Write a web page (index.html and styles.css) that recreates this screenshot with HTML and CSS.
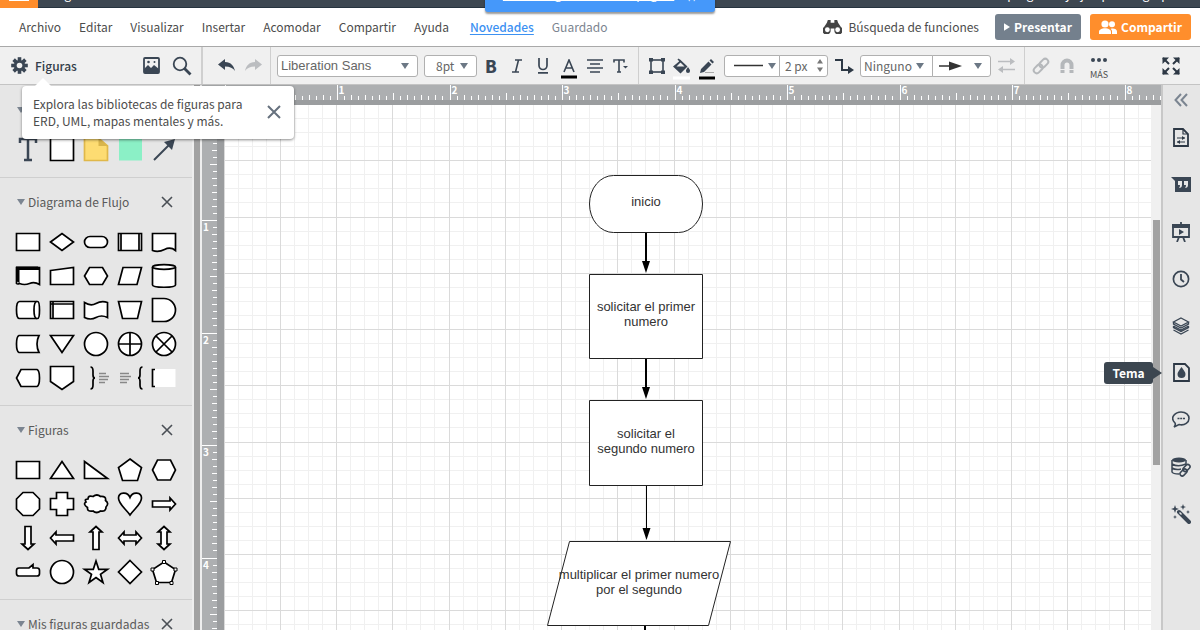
FILE: index.html
```html
<!DOCTYPE html>
<html lang="es">
<head>
<meta charset="utf-8">
<title>Diagrama</title>
<link rel="stylesheet" href="styles.css">
</head>
<body>
<header class="topbar">
  <div class="logo"></div>
  <span class="doc-title">Diagrama</span>
  <span class="account">programa y ejemplo del grupo</span>
  <div class="banner"><a href="#">Cómo asignar color a la página</a><span>( )</span></div>
</header>

<nav class="menubar">
  <a href="#">Archivo</a><a href="#">Editar</a><a href="#">Visualizar</a><a href="#">Insertar</a><a href="#">Acomodar</a><a href="#">Compartir</a><a href="#">Ayuda</a>
  <a href="#" class="news">Novedades</a>
  <span class="saved">Guardado</span>
  <button class="find">
    <svg width="19" height="14" viewBox="0 0 20 15"><path d="M5 0h3v3h4V0h3l1 3 3 4.500a4.500 4.500 0 1 1-7 4.500V9H8v3a4.500 4.500 0 1 1-7-4.500L4 3z" fill="#444"/><circle cx="4.500" cy="10.500" r="2.600" fill="#fff"/><circle cx="15.500" cy="10.500" r="2.600" fill="#fff"/></svg>
    Búsqueda de funciones</button>
  <button class="btn present"><svg width="6" height="8" viewBox="0 0 7 9"><path d="M0 0l7 4.500L0 9z" fill="#fff"/></svg>Presentar</button>
  <button class="btn share"><svg width="18" height="14" viewBox="0 0 18 14"><g fill="#fff"><circle cx="6" cy="4" r="3.600"/><path d="M0 14v-2c0-5 12-5 12 0v2zM13 14v-2.500c0-1-.5-2-1.500-2.500 3-1 6.500 0 6.500 2.500V14z"/><circle cx="13" cy="4.300" r="3"/></g></svg>Compartir</button>
</nav>

<div class="toolbar">
  <div class="group library">
    <button class="shapes-btn">
      <svg width="17" height="17" viewBox="-8.500 -8.500 17 17"><g fill="#3a4654"><g id="tooth"><rect x="-1.800" y="-8.300" width="3.600" height="16.600"/><rect x="-8.300" y="-1.800" width="16.600" height="3.600"/></g><use href="#tooth" transform="rotate(45)"/><circle r="5.600"/></g><circle r="2.800" fill="#f0f0f0"/></svg>
      Figuras</button>
    <button aria-label="Imagen"><svg width="17" height="17" viewBox="0 0 17 17"><rect x="1" y="1" width="15" height="15" rx="1" fill="#f0f0f0" stroke="#3a4654" stroke-width="1.800"/><path d="M1 12l4-4 3 3 3-3 5 4v4H1z" fill="#3a4654"/><circle cx="5.500" cy="5" r="1.300" fill="#3a4654"/><circle cx="11.500" cy="5" r="1" fill="#3a4654"/></svg></button>
    <button aria-label="Buscar"><svg width="20" height="20" viewBox="0 0 20 20"><circle cx="8" cy="8" r="6.300" fill="none" stroke="#3a4654" stroke-width="1.800"/><path d="M12.500 12.500l6 6" stroke="#3a4654" stroke-width="2.800"/></svg></button>
  </div>
  <div class="group history">
    <button aria-label="Deshacer"><svg width="18" height="14" viewBox="0 0 18 14"><path d="M7 0v3c6 0 9 4 10 9-2-3-5-4.500-10-4.500V11L0 5.500z" fill="#3a4654"/></svg></button>
    <button aria-label="Rehacer"><svg width="18" height="14" viewBox="0 0 18 14"><path d="M11 0v3C5 3 2 7 1 12c2-3 5-4.500 10-4.500V11l7-5.500z" fill="#bbbdc0"/></svg></button>
  </div>
  <div class="group text-tools">
    <label class="field font"><select aria-label="Fuente"><option>Liberation Sans</option></select></label>
    <label class="field size"><select aria-label="Tamaño"><option>8pt</option></select></label>
    <button class="glyph bold">B</button>
    <button aria-label="Cursiva"><svg width="12" height="14" viewBox="0 0 12 14"><path d="M4 1h7M1 13h7M7.500 1l-3 12" stroke="#3a4654" stroke-width="1.600"/></svg></button>
    <button aria-label="Subrayado"><svg width="12" height="16" viewBox="0 0 12 16"><path d="M2 0v7.500a4 4 0 0 0 8 0V0M1 14.800h10" fill="none" stroke="#3a4654" stroke-width="1.700"/></svg></button>
    <button aria-label="Color de texto"><svg class="low" width="16" height="20" viewBox="0 0 16 20"><path d="M3 13L8 1l5 12M4.500 9h7" fill="none" stroke="#3a4654" stroke-width="1.600"/><rect y="16.500" width="16" height="3" fill="#000"/></svg></button>
    <button aria-label="Alinear"><svg width="16" height="14" viewBox="0 0 16 14"><path d="M0 1h16M3 5h10M0 9h16M3 13h10" stroke="#3a4654" stroke-width="1.600"/></svg></button>
    <button aria-label="Más texto"><svg width="16" height="14" viewBox="0 0 16 14"><path d="M1 3.500V1h10v2.500M6 1v12M4 13h4" fill="none" stroke="#3a4654" stroke-width="1.600"/><path d="M10 7h5l-2.500 2.500z" fill="#3a4654"/></svg></button>
  </div>
  <div class="group line-tools">
    <button aria-label="Forma"><svg width="18" height="18" viewBox="0 0 18 18"><rect x="3" y="3" width="12" height="12" fill="none" stroke="#3a4654" stroke-width="1.600"/><path d="M1 1h4v3.500H1zM13 1h4v3.500h-4zM1 13.500h4V17H1zM13 13.500h4V17h-4z" fill="#3a4654"/></svg></button>
    <button aria-label="Relleno"><svg class="low" width="17" height="22" viewBox="0 0 17 22"><path d="M6.500 1l8 7.500L7.500 15.500 0 8.500 6 3.500" fill="#3a4654"/><path d="M7.500 4.500L3.500 8.500h8z" fill="#f0f0f0"/><path d="M5 1l3 3" stroke="#3a4654" stroke-width="1.500"/><path d="M15 9c2 3 2 3 2 4a2 2 0 0 1-4 0c0-1 0-1 2-4z" fill="#3a4654"/><rect y="18.500" width="17" height="3" fill="#fff"/></svg></button>
    <button aria-label="Color de línea"><svg class="low" width="16" height="22" viewBox="0 0 16 22"><path d="M1 15l1-4L9.500 3.500l3 3L5 14zM10.500 2.500l1.500-1.500 3 3-1.500 1.500z" fill="#3a4654"/><path d="M6 14.500h9" stroke="#aaa"/><rect y="18.500" width="16" height="3" fill="#000"/></svg></button>
    <button class="field stroke" aria-label="Estilo de línea"><svg width="29" height="3" viewBox="0 0 29 3"><path d="M0 1.500h29" stroke="#333" stroke-width="1.500"/></svg></button>
    <label class="field px"><input type="text" value="2 px" aria-label="Grosor"><svg width="6" height="13" viewBox="0 0 6 13"><path d="M0 4.500L3 0l3 4.500zM0 8.500L3 13l3-4.500z" fill="#777"/></svg></label>
    <button class="connector" aria-label="Conector"><svg width="19" height="16" viewBox="0 0 19 16"><path d="M0 2h7v10h7" fill="none" stroke="#2d3845" stroke-width="2"/><path d="M13 8l6 4-6 4z" fill="#2d3845"/></svg></button>
    <label class="field start"><select aria-label="Inicio de línea"><option>Ninguno</option></select></label>
    <button class="field end" aria-label="Fin de línea"><svg width="23" height="10" viewBox="0 0 23 10"><path d="M0 5h11" stroke="#333" stroke-width="1.500"/><path d="M10 .500L23 5l-13 4.500z" fill="#333"/></svg></button>
    <button class="swap" aria-label="Invertir"><svg width="17" height="15" viewBox="0 0 17 15"><path d="M0 3.500h14M3 11.500h14" stroke="#bbbdc0" stroke-width="1.600"/><path d="M12 0l5 3.500L12 7zM5 8L0 11.500 5 15z" fill="#bbbdc0"/></svg></button>
  </div>
  <div class="group more-tools">
    <button aria-label="Enlace"><svg width="18" height="18" viewBox="0 0 18 18"><g fill="none" stroke="#b5b8bb" stroke-width="2"><rect x="-5" y="-3" width="10" height="6" rx="3" transform="translate(11.800 6.200) rotate(-45)"/><rect x="-5" y="-3" width="10" height="6" rx="3" transform="translate(6.200 11.800) rotate(-45)"/></g></svg></button>
    <button aria-label="Imán"><svg width="14" height="16" viewBox="0 0 14 16"><path d="M2.500 15V7a4.500 4.500 0 0 1 9 0v8" fill="none" stroke="#b5b8bb" stroke-width="4"/><path d="M0 11.500h14" stroke="#f0f0f0"/></svg></button>
    <button class="more"><svg width="16" height="4" viewBox="0 0 16 4"><g fill="#3a4654"><circle cx="2" cy="2" r="2"/><circle cx="8" cy="2" r="2"/><circle cx="14" cy="2" r="2"/></g></svg>MÁS</button>
    <button class="full" aria-label="Pantalla completa"><svg width="18" height="18" viewBox="0 0 18 18"><path d="M1 1l6 6M17 1l-6 6M1 17l6-6M17 17l-6-6" stroke="#2d3845" stroke-width="2"/><path d="M.500 .500H7L.500 7zM17.500 .500H11L17.500 7zM.500 17.500H7L.500 11zM17.500 17.500H11l6.500-6.500z" fill="#2d3845"/></svg></button>
  </div>
</div>

<div class="workspace">
  <aside class="sidebar">
    <section>
      <h2 aria-label="Estándar"></h2>
      <div class="shapes">
        <svg viewBox="0 0 34 34" class="plain"><path d="M9 10V6h16v4M17 6v21M13 27h8" fill="none" stroke="#3a4654" stroke-width="2.500"/></svg>
        <svg viewBox="0 0 34 34"><path d="M5.500 5.500h23v22h-23z"/></svg>
        <svg viewBox="0 0 34 34" class="plain"><path d="M5.500 5h14l9 8v14.500h-23z" fill="#fddc72" stroke="#e0b84a"/><path d="M19.500 5v8h9z" fill="#d9b54c"/></svg>
        <svg viewBox="0 0 34 34" class="plain"><path d="M6 5h23v22.500H6z" fill="#8bf0c6"/></svg>
        <svg viewBox="0 0 34 34" class="plain"><path d="M7 27L22 12" stroke="#3a4654" stroke-width="2"/><path d="M28 6l-3 11-8-8z" fill="#3a4654"/></svg>
      </div>
    </section>
    <section>
      <h2>Diagrama de Flujo <button aria-label="Cerrar Diagrama de Flujo"><svg width="12" height="12" viewBox="0 0 12 12"><path d="M1 1l10 10M11 1L1 11" stroke="#4a4f55" stroke-width="1.600"/></svg></button></h2>
      <div class="shapes">
        <svg viewBox="0 0 34 34"><path d="M5.500 8.500h23v17h-23z"/></svg>
        <svg viewBox="0 0 34 34"><path d="M5.500 17L17 8.500 28.500 17 17 25.500z"/></svg>
        <svg viewBox="0 0 34 34"><rect x="5.500" y="11.500" width="23" height="11" rx="5.500"/></svg>
        <svg viewBox="0 0 34 34"><path d="M5.500 8.500h23v17h-23zM8 8v18M26 8v18"/></svg>
        <svg viewBox="0 0 34 34"><path d="M5.500 8.500h23v17q-5-4-11-1t-12 1z"/></svg>
        <svg viewBox="0 0 34 34"><path d="M5.500 8.500h23v17q-5-3-10-1t-10 0q-2 1-3 0z"/><path d="M5 7.500h22l2 3.500H8.500V24L5 22z" fill="#000" stroke="none"/></svg>
        <svg viewBox="0 0 34 34"><path d="M5.500 11.500l23-3v17h-23z"/></svg>
        <svg viewBox="0 0 34 34"><path d="M5.500 17l5-8.500h13l5 8.500-5 8.500h-13z"/></svg>
        <svg viewBox="0 0 34 34"><path d="M10 8.500h18.500L24 25.500H5.500z"/></svg>
        <svg viewBox="0 0 34 34"><path d="M5.500 8v18c0 3 23 3 23 0V8"/><ellipse cx="17" cy="8" rx="11.500" ry="2.300"/></svg>
        <svg viewBox="0 0 34 34"><path d="M8.500 8.500h18q2 0 2 8.500t-2 8.500h-18q-3 0-3-8.500t3-8.500z"/><path d="M26 8.500q-3 0-3 8.500t3 8.500"/></svg>
        <svg viewBox="0 0 34 34"><path d="M5.500 8.500h23v17h-23zM5.500 11h23M8 8v18"/></svg>
        <svg viewBox="0 0 34 34"><path d="M5.500 9.500q6 4 11.500 1t11.500-1v15q-6-3-11.500 0t-11.500 0z"/></svg>
        <svg viewBox="0 0 34 34"><path d="M5.500 8.500h23l-4 17h-15z"/></svg>
        <svg viewBox="0 0 34 34"><path d="M5.500 5.500H17a11.500 11.500 0 0 1 0 23H5.500z"/></svg>
        <svg viewBox="0 0 34 34"><path d="M8 8.500h20q-2 4-2 8.500t2 8.500H8q-2.500-1-2.500-8.500T8 8.500z"/></svg>
        <svg viewBox="0 0 34 34"><path d="M5.500 8.500h23L17 25.500z"/></svg>
        <svg viewBox="0 0 34 34"><circle cx="17" cy="17" r="11.500"/></svg>
        <svg viewBox="0 0 34 34"><circle cx="17" cy="17" r="11.500"/><path d="M5.500 17h23M17 5.500v23"/></svg>
        <svg viewBox="0 0 34 34"><circle cx="17" cy="17" r="11.500"/><path d="M9 9l16 16M25 9L9 25"/></svg>
        <svg viewBox="0 0 34 34"><path d="M10 8.500h16q2.500 1 2.500 8.500T26 25.500H10L5.500 17z"/></svg>
        <svg viewBox="0 0 34 34"><path d="M5.500 5.500h23v15L17 28.500l-11.500-8z"/></svg>
        <svg viewBox="0 0 34 34" class="line"><path d="M11.500 6q2.500 0 2.500 4v4q0 3 2 3-2 0-2 3v4q0 4-2.500 4"/><path d="M20 12.500h7M20 15.500h10M20 18.500h9M20 21.500h6" stroke="#888"/></svg>
        <svg viewBox="0 0 34 34" class="line"><path d="M29.500 6q-2.500 0-2.500 4v4q0 3-2 3 2 0 2 3v4q0 4 2.500 4"/><path d="M7 12.500h9M7 15.500h11M7 18.500h9M7 21.500h7" stroke="#888"/></svg>
        <svg viewBox="0 0 34 34"><path d="M5.500 8h23v18h-23z" stroke="none"/><path d="M8 8.500H5.500v17H8"/></svg>
      </div>
    </section>
    <section>
      <h2>Figuras <button aria-label="Cerrar Figuras"><svg width="12" height="12" viewBox="0 0 12 12"><path d="M1 1l10 10M11 1L1 11" stroke="#4a4f55" stroke-width="1.600"/></svg></button></h2>
      <div class="shapes">
        <svg viewBox="0 0 34 34"><path d="M5.500 8.500h23v17h-23z"/></svg>
        <svg viewBox="0 0 34 34"><path d="M5.500 25.500L17 8.500l11.500 17z"/></svg>
        <svg viewBox="0 0 34 34"><path d="M5.500 8.500l23 17h-23z"/></svg>
        <svg viewBox="0 0 34 34"><path d="M17 6l11.500 8.500-4 13h-15l-4-13z"/></svg>
        <svg viewBox="0 0 34 34"><path d="M5.500 17l5-10h13l5 10-5 10h-13z"/></svg>
        <svg viewBox="0 0 34 34"><path d="M12 5.500h10l6.500 6.500v10L22 28.500H12L5.500 22V12z"/></svg>
        <svg viewBox="0 0 34 34"><path d="M11.500 5.500h11v6h6v11h-6v6h-11v-6h-6v-11h6z"/></svg>
        <svg viewBox="0 0 34 34"><path d="M9 12q0-4 5-2.500 4-3 7.500 0 6-.500 5 4 4 3 .500 6.500 0 5-5.500 4-4 3-7.500 0-6 1-5.500-3.500-5-3.500-1.500-5.500Q5 12 9 12z"/></svg>
        <svg viewBox="0 0 34 34"><path d="M17 28C12 21 5.500 17 5.500 11c0-6 9-7 11.500-.500C19.500 4 28.500 5 28.500 11c0 6-6.500 10-11.500 17z"/></svg>
        <svg viewBox="0 0 34 34"><path d="M5.500 14H23v-3l5.500 6-5.500 6v-3H5.500z"/></svg>
        <svg viewBox="0 0 34 34"><path d="M14 5.500h6V23h3l-6 5.500-6-5.500h3z"/></svg>
        <svg viewBox="0 0 34 34"><path d="M28.500 14H11v-3l-5.500 6 5.500 6v-3h17.500z"/></svg>
        <svg viewBox="0 0 34 34"><path d="M14 28.500h6V11h3l-6-5.500-6 5.500h3z"/></svg>
        <svg viewBox="0 0 34 34"><path d="M5.500 17l5.500-6v3h12v-3l5.500 6-5.500 6v-3H11v3z"/></svg>
        <svg viewBox="0 0 34 34"><path d="M17 5.500l6 5.500h-3v12h3l-6 5.500-6-5.500h3V11h-3z"/></svg>
        <svg viewBox="0 0 34 34"><path d="M8 13h10l4-3.500V13h4q2.500 0 2.500 2.500v3Q28.500 21 26 21H8q-2.500 0-2.500-2.500v-3Q5.500 13 8 13z"/></svg>
        <svg viewBox="0 0 34 34"><circle cx="17" cy="17" r="11.500"/></svg>
        <svg viewBox="0 0 34 34"><path d="M17 6l2.700 8.300h8.800l-7 5 2.500 8.200-7-5-7 5 2.500-8.200-7-5h8.800z"/></svg>
        <svg viewBox="0 0 34 34"><path d="M17 5.500L28.500 17 17 28.500 5.500 17z"/></svg>
        <svg viewBox="0 0 34 34"><path d="M17 7l11.500 7.500-4 13h-15l-4-13z"/><path d="M15.500 5.500h3v3h-3zM27 13h3v3h-3zM23 26.500h3v3h-3zM8.500 26.500h3v3h-3zM4 13h3v3H4z" stroke-width="1"/></svg>
      </div>
    </section>
    <section>
      <h2>Mis figuras guardadas <button aria-label="Cerrar Mis figuras guardadas"><svg width="12" height="12" viewBox="0 0 12 12"><path d="M1 1l10 10M11 1L1 11" stroke="#4a4f55" stroke-width="1.600"/></svg></button></h2>
    </section>
  </aside>
  <div class="side-scroll"></div>

  <main class="stage">
    <svg class="ruler-h" id="rulerH"></svg>
    <svg class="ruler-v" id="rulerV"></svg>
    <svg class="canvas" id="canvas">
      <g id="grid"></g>
      <g class="node">
        <rect x="365.500" y="70.500" width="113" height="57" rx="24" ry="28.500"/>
        <path d="M365.500 169.500h113v84h-113zM365.500 295.500h113v85h-113zM345.500 436.500h161l-22 84h-161z"/>
      </g>
      <g class="edge">
        <path d="M422 128v32M422 254v32" stroke-width="2"/><path d="M422.500 381v47" stroke-width="1"/><path d="M421 521v20" stroke-width="2"/>
        <path class="head" d="M418 156h8l-4 12zM418 282h8l-4 12zM418.500 423h8l-4 12z"/>
      </g>
      <g class="caption">
        <text x="422" y="101">inicio</text>
        <text x="422" y="206">solicitar el primer</text><text x="422" y="221">numero</text>
        <text x="422" y="333">solicitar el</text><text x="422" y="348">segundo numero</text>
        <text x="415" y="474">multiplicar el primer numero</text><text x="415" y="489">por el segundo</text>
      </g>
    </svg>
    <div class="vscroll"><div class="thumb"></div></div>
  </main>

  <aside class="dock">
    <button class="collapse" aria-label="Contraer"><svg width="14" height="14" viewBox="0 0 14 14"><path d="M7 1L1.500 7 7 13M13 1L7.500 7l5.500 6" fill="none" stroke="#7b8591" stroke-width="2"/></svg></button>
    <button aria-label="Página"><svg width="16" height="19" viewBox="0 0 16 19"><path d="M1 1h9l5 5v12H1z" fill="none" stroke="#2d3845" stroke-width="1.800"/><path d="M10 1v5h5M4 10h8M4 14h8" fill="none" stroke="#2d3845" stroke-width="1.200"/><path d="M9 8l3 2-3 2zM7 12l-3 2 3 2z" fill="#2d3845"/></svg></button>
    <button aria-label="Notas"><svg width="20" height="15" viewBox="0 0 20 15"><path d="M0 0h20v15H4V4z" fill="#3a4654"/><path d="M7 4h4v4q0 3-3 3 1-1 1-3H7zM13 4h4v4q0 3-3 3 1-1 1-3h-2z" fill="#e6e6e6"/></svg></button>
    <button aria-label="Presentación"><svg width="18" height="20" viewBox="0 0 18 20"><path d="M1 3h16v12H1zM9 0v3M7 15l-2 5M11 15l2 5" fill="none" stroke="#3a4654" stroke-width="1.800"/><path d="M0 2h18v4H0zM7 7l5 3-5 3z" fill="#3a4654"/></svg></button>
    <button aria-label="Historial"><svg width="18" height="18" viewBox="0 0 18 18"><path d="M9 4v5.500l3 2.500" fill="none" stroke="#3a4654" stroke-width="1.800"/><circle cx="9" cy="9" r="7.600" fill="none" stroke="#3a4654" stroke-width="1.700"/></svg></button>
    <button aria-label="Capas"><svg width="18" height="18" viewBox="0 0 18 18"><path d="M9 1l7.500 4L9 9 1.500 5zM1.500 9L9 13l7.500-4M1.500 13L9 17l7.500-4M1.500 5v2L9 11l7.500-4V5M1.500 9v1.500L9 14.500l7.500-4V9" fill="none" stroke="#3a4654" stroke-width="1.300"/></svg></button>
    <button class="theme" aria-label="Tema"><svg width="17" height="19" viewBox="0 0 17 19"><path d="M1 1h11l4 4v13H1z" fill="none" stroke="#2d3845" stroke-width="1.800"/><path d="M8.500 4c2 3 4 5 4 7a4 4 0 0 1-8 0c0-2 2-4 4-7z" fill="#3a4654"/></svg><span class="tip">Tema</span></button>
    <button aria-label="Comentarios"><svg width="18" height="17" viewBox="0 0 18 17"><path d="M3 12C-3 6 4 1 9 1s8 3 8 6.500-4 7.500-10 6L2 16q2-2 1-4z" fill="none" stroke="#3a4654" stroke-width="1.600"/><path d="M5.500 7.500h2M8.200 7.500h2M11 7.500h2" stroke="#3a4654" stroke-width="1.500"/></svg></button>
    <button aria-label="Datos"><svg width="20" height="20" viewBox="0 0 20 20"><ellipse cx="8" cy="3" rx="7" ry="2.500" fill="#3a4654"/><path d="M1 3v12q1 2 7 2M15 3v5M1 7q6 3.500 14 0M1 11q4 2.500 9 1" fill="none" stroke="#3a4654" stroke-width="1.500"/><g fill="none" stroke="#3a4654" stroke-width="1.600"><rect x="-4" y="-2.200" width="8" height="4.400" rx="2.200" transform="translate(15.500 11) rotate(-45)"/><rect x="-4" y="-2.200" width="8" height="4.400" rx="2.200" transform="translate(12.500 15.500) rotate(-45)"/></g></svg></button>
    <button aria-label="Magia"><svg width="20" height="20" viewBox="0 0 20 20"><path d="M8 8l10 10" stroke="#3a4654" stroke-width="4" stroke-linecap="round"/><path d="M8.500 8.500l2 2" stroke="#e6e6e6" stroke-width="1.400"/><path d="M4 1l1 3 3 1-3 1-1 3-1-3-3-1 3-1zM12 0l.8 2.200L15 3l-2.200.8L12 6l-.8-2.200L9 3l2.200-.8zM17 6l.6 1.400L19 8l-1.400.6L17 10l-.6-1.400L15 8l1.400-.6zM4 11l.6 1.400L6 13l-1.400.6L4 15l-.6-1.400L2 13l1.400-.6z" fill="#3a4654"/></svg></button>
  </aside>

  <div class="popover" role="status">
    <p>Explora las bibliotecas de figuras para ERD, UML, mapas mentales y más.</p>
    <button aria-label="Cerrar aviso"><svg width="14" height="14" viewBox="0 0 14 14"><path d="M1 1l12 12M13 1L1 13" stroke="#66717e" stroke-width="2"/></svg></button>
  </div>
</div>
<script src="rulers.js"></script>
</body>
</html>
```
FILE: styles.css
```css
* { box-sizing: border-box; }
body {
  margin: 0;
  height: 100vh;
  display: flex;
  flex-direction: column;
  overflow: hidden;
  background: #fff;
  color: #4c4c4c;
  font: 12px/17px "Noto Sans CJK SC", "Noto Sans", sans-serif;
}
button, select, input { font: inherit; color: inherit; }
button { border: 0; padding: 0; background: none; display: flex; align-items: center; justify-content: center; }
svg { flex: none; display: block; }
a { color: inherit; text-decoration: none; }

.topbar { position: relative; flex: none; height: 8px; display: flex; align-items: flex-end; justify-content: space-between; background: #3d4751; border-bottom: 1px solid #26333f; color: #fff; clip-path: inset(0 0 -10px 0); }
.topbar > * { flex: none; }
.logo { width: 38px; height: 8px; background: #ff8d2b; margin-bottom: -1px; }
.logo::after { content: ""; display: block; width: 20px; height: 1px; margin-left: 9px; background: #fff; }
.doc-title { margin: 0 auto 5px 8px; }
.account { margin: 0 24px 5px 0; }
.banner { position: absolute; z-index: 3; left: 50%; bottom: -5px; width: 230px; height: 60px; margin-left: -115px; padding-bottom: 10px; display: flex; align-items: flex-end; justify-content: center; gap: 12px; background: #4598fa; border-radius: 3px; box-shadow: 0 2px 2px #0006; }
.banner a { text-decoration: underline; text-decoration-skip-ink: none; }

.menubar { flex: none; height: 39px; display: flex; align-items: center; gap: 18px; padding: 0 9px 1px 19px; border-bottom: 1px solid #a9a9a9; white-space: nowrap; }
.news { margin-left: 3px; color: #3c91f2; font-weight: 500; text-decoration: underline; text-underline-offset: 2px; }
.saved { color: #7c8590; }
.find { margin-left: auto; gap: 6px; }
.btn { height: 26px; gap: 4px; border-radius: 3px; color: #fff; font-weight: 700; }
.present { width: 86px; margin-left: -2px; background: #74808d; }
.share { width: 101px; margin-left: -9px; background: #ff8e2c; }

.toolbar { flex: none; height: 38px; display: flex; background: #f0f0f0; border-bottom: 1px solid #c4c4c4; }
.group { flex: none; display: flex; align-items: center; border-right: 1px solid #cfcfcf; }
.library { width: 203px; padding: 0 9px 0 11px; gap: 12px; border-right-width: 2px; }
.shapes-btn { margin-right: auto; gap: 7px; font-weight: 500; color: #333d49; }
.history { width: 68px; padding-left: 11px; }
.history button { width: 26px; }
.text-tools { width: 368px; padding-left: 6px; }
.text-tools > button { width: 26px; height: 26px; }
.field { position: relative; flex: none; display: flex; align-items: center; height: 22px; background: #fff; border: 1px solid #b0b0b0; border-radius: 3px; color: #666; }
.field select, .field input { width: 100%; height: 20px; border: 0; padding: 0 3px; background: none; appearance: none; outline: 0; }
.field:has(select)::after, .stroke::after, .end::after { content: ""; position: absolute; right: 8px; top: 7px; border: 4px solid transparent; border-top: 6px solid #6c7885; border-bottom: 0; }
.font { width: 141px; margin-right: 6px; font-family: "Liberation Sans", Arial, sans-serif; font-size: 13px; }
.size { width: 53px; margin-right: 1px; }
.size select { padding-left: 11px; }
.glyph.bold { font-size: 17px; font-weight: 900; color: #3a4654; }
.low { margin-top: 6px; }
.line-tools { width: 386px; padding-left: 5px; }
.line-tools > button:not(.field) { width: 25px; }
.stroke { width: 56px; margin-left: 5px; padding-left: 9px; justify-content: flex-start; border-radius: 3px 0 0 3px; }
.stroke::after { right: 3px; }
.px { width: 49px; margin-left: -1px; padding-right: 4px; border-radius: 0 3px 3px 0; }
.px input { padding-left: 5px; }
.line-tools > .connector:not(.field) { width: 32px; }
.start { width: 73px; border-radius: 3px 0 0 3px; }
.end { width: 59px; margin-left: -1px; padding-left: 6px; justify-content: flex-start; border-radius: 0 3px 3px 0; }
.line-tools > .swap:not(.field) { width: 30px; }
.more-tools { flex: 1; padding: 0 14px 0 3px; border-right: 0; }
.more-tools button { width: 26px; }
.more-tools .more { width: 38px; height: 22px; flex-direction: column; justify-content: space-between; font-size: 9px; line-height: 11px; margin-top: 6px; }
.more-tools .full { width: 30px; margin-left: auto; }

.workspace { position: relative; flex: 1; min-height: 0; display: flex; }
.sidebar { flex: none; width: 192px; overflow: hidden; background: #e6e6e6; }
.sidebar section { border-top: 1px solid #cfcfcf; padding-bottom: 10px; }
.sidebar section:first-child { border-top-color: #e6e6e6; }
.sidebar h2 { display: flex; align-items: center; height: 47px; margin: 0; padding: 0 19px 0 17px; gap: 3px; font-size: 12px; font-weight: 400; white-space: nowrap; color: #5a5a5a; }
.sidebar h2::before { content: ""; border: 4px solid transparent; border-top: 6px solid #7b8591; border-bottom: 0; }
.sidebar h2 button { margin-left: auto; }
.shapes { display: grid; grid-template-columns: repeat(5, 34px); grid-auto-rows: 34px; padding-left: 11px; }
.shapes svg { fill: #fff; stroke: #000; stroke-width: 1.7; }
.shapes .plain { stroke: none; }
.shapes .line { fill: none; }
.side-scroll { flex: none; width: 10px; background: #a2a2a2; border: solid #eee; border-width: 0 2px; }

.stage { flex: 1; min-width: 0; display: grid; grid-template: 20px 1fr / 22px 1fr 10px; }
.ruler-h { grid-column: 1 / -1; width: 100%; height: 20px; background: linear-gradient(#adafb1 15px, #9b9d9f 15px); }
.ruler-v { width: 22px; height: 100%; background: linear-gradient(90deg, #adafb1 15px, #9b9d9f 15px); }
.ruler-h text, .ruler-v text { font-size: 10px; font-weight: 700; fill: #fff; }
.tick { stroke: #fff; }
.canvas { width: 100%; height: 100%; background: #fff; }
.minor { stroke: #f0f0f0; }
.major { stroke: #dadada; }
.node { fill: #fff; stroke: #222; }
.edge { stroke: #000; fill: none; }
.edge .head { fill: #000; stroke: none; }
.caption { font: 13px "Liberation Sans", Arial, sans-serif; fill: #333; text-anchor: middle; }
.vscroll { background: #f0f0f0; padding: 115px 1px 0 2px; }
.thumb { height: 245px; background: #a2a2a2; }

.dock { flex: none; width: 39px; background: #e6e6e6; border-left: 2px solid #c8c8c8; }
.dock button { position: relative; width: 36px; height: 47px; }
.dock .collapse { height: 29px; }
.tip { position: absolute; right: 46px; top: 13px; width: 49px; height: 22px; line-height: 22px; border-radius: 3px; background: #3c4650; color: #fff; font-weight: 700; }
.tip::after { content: ""; position: absolute; left: 100%; top: 5px; border: 6px solid transparent; border-left: 9px solid #3c4650; border-right: 0; }

.popover { position: absolute; z-index: 2; left: 22px; top: 1px; width: 272px; display: flex; align-items: center; justify-content: space-between; padding: 9px 13px 10px 11px; background: #fff; border-radius: 4px; box-shadow: 0 1px 3px #0007; }
.popover::before { content: ""; position: absolute; left: 12px; top: -8px; border: 9px solid transparent; border-bottom: 9px solid #fff; border-top: 0; }
.popover p { width: 216px; margin: 0; }
```
FILE: rulers.js
```javascript
// One inch on the page; the grid has 8 cells per inch, the rulers 16 ticks.
const INCH = 112.5;
const snap = v => Math.floor(v) + 0.5;

let minor = '', major = '';
for (let i = 0; i < 160; i++) {
  const x = snap(i * INCH / 8);
  const y = snap(i * INCH / 8 - 0.5);
  const isMajor = i % 4 === 0;
  const d = `M${x} 0V2000M0 ${y}H4000`;
  if (isMajor) major += d; else minor += d;
}
document.getElementById('grid').innerHTML =
  `<path class="minor" d="${minor}"/><path class="major" d="${major}"/>`;

let h = '', v = '', hText = '', vText = '';
for (let i = -2; i < 320; i++) {
  const long = i % 16 === 0;
  const len = long ? 15 : i % 8 === 0 ? 7 : i % 2 === 0 ? 5 : 4;
  const x = snap(23 + i * INCH / 16);
  const y = snap(3 + i * INCH / 16);
  h += `M${x} ${15 - len}V15`;
  v += `M${15 - len} ${y}H15`;
  if (long && i > 0) {
    hText += `<text x="${x + 1}" y="9">${i / 16}</text>`;
    vText += `<text x="1" y="${y + 10}">${i / 16}</text>`;
  }
}
document.getElementById('rulerH').innerHTML = `<path class="tick" d="${h}"/>${hText}`;
document.getElementById('rulerV').innerHTML = `<path class="tick" d="${v}"/>${vText}`;
```
